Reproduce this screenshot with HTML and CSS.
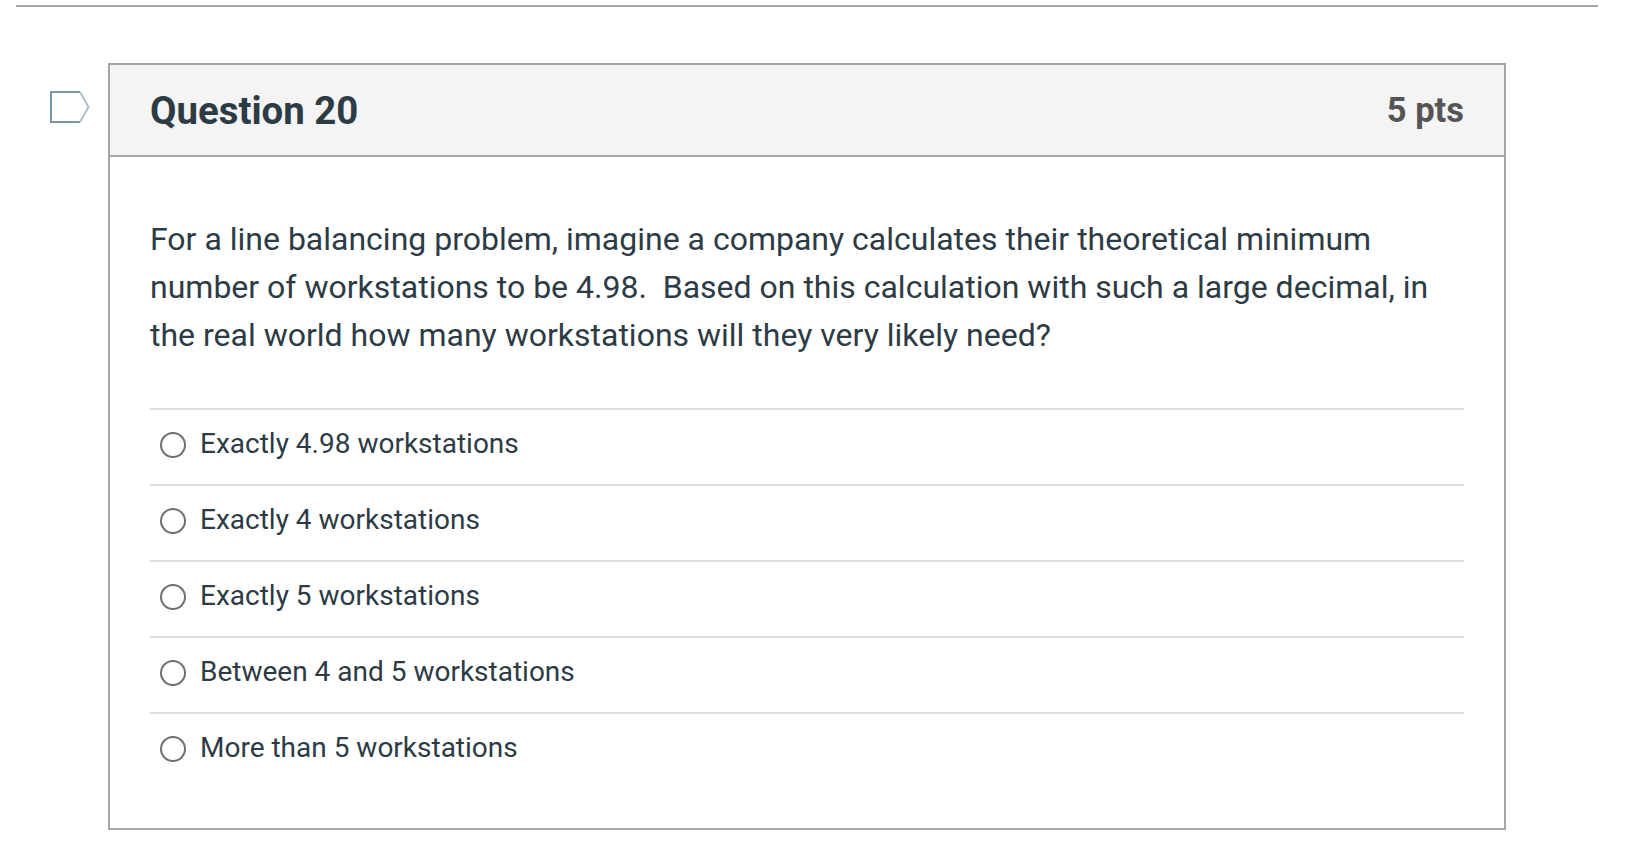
FILE: index.html
```html
<!DOCTYPE html>
<html lang="en">
<head>
  <meta charset="UTF-8" />
  <title>Question 20</title>
  <link rel="stylesheet" href="styles.css">
</head>
<body>
  <hr class="top-rule">
  <div class="question-row">
    <svg class="flag" width="42" height="34" viewBox="0 0 42 34">
      <path d="M31 2 H2 V32 H31" fill="none" stroke="#7b95a8" stroke-width="2"/>
      <path d="M31 2 L39.500 17 L31 32" fill="none" stroke="#aebfca" stroke-width="2"/>
    </svg>
    <div class="question">
      <div class="question-header">
        <span class="question-name">Question 20</span>
        <span class="question-pts">5 pts</span>
      </div>
      <div class="question-body">
        <p class="question-text">For a line balancing problem, imagine a company calculates their theoretical minimum number of workstations to be 4.98.&nbsp; Based on this calculation with such a large decimal, in the real world how many workstations will they very likely need?</p>
        <div class="answers">
          <div class="answer"><span class="radio"></span>Exactly 4.98 workstations</div>
          <div class="answer"><span class="radio"></span>Exactly 4 workstations</div>
          <div class="answer"><span class="radio"></span>Exactly 5 workstations</div>
          <div class="answer"><span class="radio"></span>Between 4 and 5 workstations</div>
          <div class="answer"><span class="radio"></span>More than 5 workstations</div>
        </div>
      </div>
    </div>
  </div>
</body>
</html>
```

FILE: styles.css
```css
html, body {
  height: 844px;
  overflow: hidden;
}
body {
  margin: 0;
  background-color: #fff;
  color: #2d3b45;
  font-family: Roboto, sans-serif;
}
.top-rule {
  margin: 5px 32px 0 16px;
  height: 2px;
  border: none;
  background-color: #a5a5a5;
}
.question-row {
  display: flex;
  align-items: flex-start;
  margin-top: 56px;
  padding-left: 49px;
}
.flag {
  margin: 27px 17px 0 0;
  flex: none;
}
.question {
  width: 1398px;
  box-sizing: border-box;
  border: 2px solid #a5a5a5;
}
.question-header {
  display: flex;
  justify-content: space-between;
  align-items: center;
  height: 90px;
  padding: 0 40px;
  background-color: #f4f4f5;
  border-bottom: 2px solid #a5a5a5;
}
.question-name {
  font-size: 38.400px;
  font-weight: 700;
}
.question-pts {
  font-size: 34.500px;
  font-weight: 700;
  color: #555;
}
.question-body {
  padding: 58px 40px 40px;
}
.question-text {
  margin: 0 0 49px;
  font-size: 32px;
  line-height: 48px;
}
.answer {
  display: flex;
  align-items: center;
  box-sizing: border-box;
  height: 76px;
  padding-bottom: 7px;
  border-top: 2px solid #dcdddd;
  font-size: 28px;
}
.radio {
  width: 22px;
  height: 22px;
  margin: 3px 14px 0 10px;
  border: 2px solid #6f6f6f;
  border-radius: 50%;
  flex: none;
}
```
